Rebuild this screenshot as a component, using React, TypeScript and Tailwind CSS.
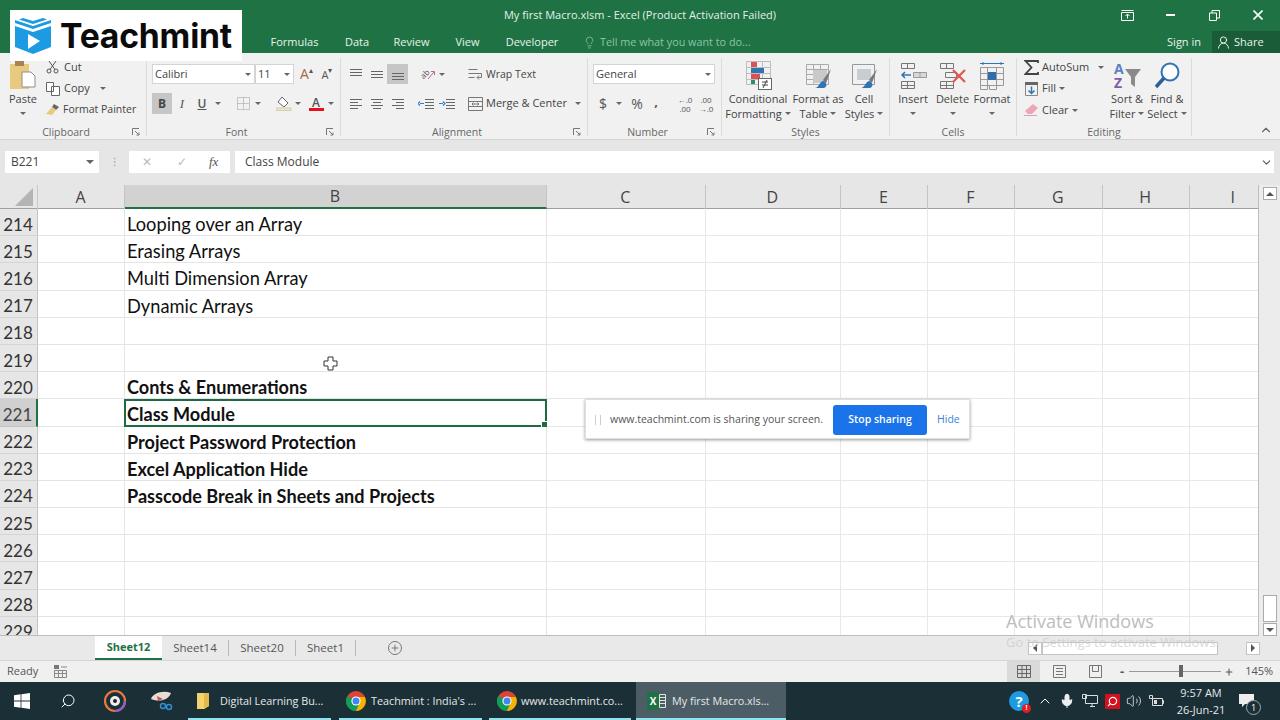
import { ReactNode } from "react";
import clsx from "clsx";
import { ChevronUp, ChevronDown, Search, Lightbulb, UserRound, Mic, Volume2, Plus } from "lucide-react";

const rows: { n: number; text?: string; bold?: boolean; selected?: boolean }[] = [
  { n: 214, text: "Looping over an Array" },
  { n: 215, text: "Erasing Arrays" },
  { n: 216, text: "Multi Dimension Array" },
  { n: 217, text: "Dynamic Arrays" },
  { n: 218 },
  { n: 219 },
  { n: 220, text: "Conts & Enumerations", bold: true },
  { n: 221, text: "Class Module", bold: true, selected: true },
  { n: 222, text: "Project Password Protection", bold: true },
  { n: 223, text: "Excel Application Hide", bold: true },
  { n: 224, text: "Passcode Break in Sheets and Projects", bold: true },
  { n: 225 },
  { n: 226 },
  { n: 227 },
  { n: 228 },
  { n: 229 },
];

const gridCols = "grid grid-cols-[38px_87px_422px_158.5px_135.5px_87px_87px_87.5px_87.5px_87.5px]";

function Caret({ className }: { className?: string }) {
  return <span className={clsx("inline-block w-0 h-0 border-x-[3px] border-x-transparent border-t-[3px] border-t-[#666]", className)} />;
}

function Slot({ w, children, active }: { w: string; children?: ReactNode; active?: boolean }) {
  return <div className={clsx("flex items-center justify-center h-full shrink-0", w, active && "bg-[#c6c6c6]")}>{children}</div>;
}

function Lines({ align }: { align: "l" | "c" | "r" }) {
  const x = align === "l" ? [1, 1, 1, 1] : align === "c" ? [1, 3, 1, 3] : [1, 5, 1, 5];
  const w = [12, 8, 12, 8];
  return (
    <svg width="14" height="12" viewBox="0 0 14 12">
      {[1, 4, 7, 10].map((y, i) => (
        <rect key={y} x={x[i]} y={y} width={w[i]} height="1" fill="#666" />
      ))}
    </svg>
  );
}

function VAlign({ top }: { top: number }) {
  return (
    <svg width="14" height="12" viewBox="0 0 14 12">
      {[0, 3, 6].map((d) => (
        <rect key={d} x="1" y={top + d} width="12" height="1" fill="#666" />
      ))}
    </svg>
  );
}

function Indent({ flip }: { flip?: boolean }) {
  return (
    <svg width="16" height="12" viewBox="0 0 16 12">
      {[1, 4, 7, 10].map((y) => (
        <rect key={y} x="7" y={y} width="9" height="1" fill="#666" />
      ))}
      <path d={flip ? "M0 5.5h4M4 3.5l2 2-2 2" : "M2 5.5h4M2 3.5l-2 2 2 2"} stroke="#2b7cd3" fill="none" strokeWidth="1.2" />
    </svg>
  );
}

function Big({ w, icon, lines, caretOnly }: { w: string; icon: ReactNode; lines: string[]; caretOnly?: boolean }) {
  return (
    <div className={clsx("flex flex-col items-center pt-[7px] shrink-0", w)}>
      <div className="h-[31px] flex items-center justify-center">{icon}</div>
      <div className="text-[11px] leading-[15px] text-[#444] whitespace-nowrap text-center">
        {lines.map((l, i) => (
          <div key={l} className="flex items-center justify-center gap-[3px]">
            {l}
            {i === lines.length - 1 && !caretOnly && <Caret />}
          </div>
        ))}
        {caretOnly && (
          <div className="h-[15px] flex items-center justify-center">
            <Caret />
          </div>
        )}
      </div>
    </div>
  );
}

function Group({ w, label, launcher, children }: { w: string; label: string; launcher?: boolean; children: ReactNode }) {
  return (
    <div className={clsx("flex flex-col shrink-0 h-full", w)}>
      <div className="flex-1 border-r border-[#dcdcdc] min-h-0 flex flex-col mt-[5px] mb-[3px]">
        <div className="flex-1 min-h-0 -mt-[5px]">{children}</div>
        <div className="h-[14px] flex items-center -mb-[3px]">
          <div className="flex-1 text-center text-[10.5px] text-[#666] leading-none">{label}</div>
          {launcher && (
            <div className="w-[14px] flex justify-start">
              <svg width="8" height="8" viewBox="0 0 8 8" fill="none" stroke="#777">
                <path d="M.5 7V.5H7M3 3l4 4M4.5 7H7V4.5" />
              </svg>
            </div>
          )}
        </div>
      </div>
    </div>
  );
}

function SmallRows({ children, pl }: { children: ReactNode; pl: string }) {
  return <div className={clsx("flex flex-col pt-[11px] gap-[9px]", pl)}>{children}</div>;
}

function Combo({ w, text }: { w: string; text: string }) {
  return (
    <div className={clsx("h-[20px] bg-white border border-[#d4d4d4] flex items-center justify-between px-[2px] text-[11px] text-[#444] shrink-0", w)}>
      <span>{text}</span>
      <Caret className="mr-[1px]" />
    </div>
  );
}

function MiniGrid({ children }: { children?: ReactNode }) {
  return (
    <svg width="30" height="30" viewBox="0 0 30 30" fill="none">
      {children}
    </svg>
  );
}

function TeachmintLogo() {
  return (
    <div className="absolute left-[10px] top-[10px] w-[232px] h-[51px] bg-white flex items-center pl-[5px]">
      <svg width="36" height="38" viewBox="0 0 36 38" className="shrink-0">
        <path d="M0 9 L18 15 L36 9 V30 L18 37 L0 30 Z" fill="#1c9be2" />
        <path d="M0 6 L18 12 L36 6 L36 3 L18 9 L0 3 Z" fill="#1c9be2" />
        <path d="M4 2.5 L18 7 L32 2.5 L28 1 L18 4 L8 1 Z" fill="#1c9be2" />
        <path d="M13 17 L25 24 L13 32 Z" fill="#fff" />
      </svg>
      <span className="font-['Inter',sans-serif] font-bold text-[33.7px] tracking-[-0.2px] text-[#0b0b0b] ml-[9px] leading-none">Teachmint</span>
    </div>
  );
}

function ChromeIcon() {
  return (
    <svg width="20" height="20" viewBox="0 0 20 20">
      <circle cx="10" cy="10" r="10" fill="#db4437" />
      <path d="M10 10 L1.3 5 A10 10 0 0 0 10 20 L15 11 Z" fill="#0f9d58" />
      <path d="M10 6 H18.9 A10 10 0 0 1 10 20 L14 11 Z" fill="#f4b400" />
      <circle cx="10" cy="10" r="4.6" fill="#fff" />
      <circle cx="10" cy="10" r="3.5" fill="#4285f4" />
    </svg>
  );
}

function TaskItem({ w, icon, text, active }: { w: string; icon: ReactNode; text: string; active?: boolean }) {
  return (
    <div className={clsx("relative flex items-center h-full shrink-0 text-[10.8px] text-[#e4e8ea]", w, active && "bg-[#4d5d65]")}>
      {icon}
      <span className="whitespace-nowrap">{text}</span>
      <div className="absolute left-0 right-0 bottom-0 h-[2px] bg-[#90e3f0]" />
    </div>
  );
}

export default function App() {
  return (
    <div className="relative w-[1280px] h-[720px] overflow-hidden flex flex-col font-['Open_Sans',sans-serif] bg-white">
      {/* title bar and tabs */}
      <div className="h-[53px] bg-[#1f7244] text-white shrink-0 flex flex-col">
        <div className="h-[30px] flex items-center relative">
          <div className="flex-1 text-center text-[11px] text-[#e4f0e8]">My first Macro.xlsm - Excel (Product Activation Failed)</div>
          <div className="absolute right-0 top-0 h-full flex items-center">
            <Slot w="w-[44px]">
              <svg width="13" height="11" viewBox="0 0 13 11" fill="none" stroke="#fff">
                <path d="M.5 2.5h12v8H.5zM.5.5h12M6.5 8.5V4.5M4.5 6l2-2 2 2" />
              </svg>
            </Slot>
            <Slot w="w-[43px]">
              <div className="w-[9px] h-[2px] bg-white" />
            </Slot>
            <Slot w="w-[44px]">
              <svg width="11" height="11" viewBox="0 0 11 11" fill="none" stroke="#fff">
                <path d="M.5 3h7v7.5h-7zM3 3V.5h7.5V8H8" />
              </svg>
            </Slot>
            <Slot w="w-[44px]">
              <svg width="10" height="10" viewBox="0 0 10 10" stroke="#fff" strokeWidth="1.6">
                <path d="M.5.5l9 9M9.5.5l-9 9" />
              </svg>
            </Slot>
          </div>
        </div>
        <div className="h-[23px] flex items-center text-[11px] text-[#e8f2ec] pt-[1px]">
          <div className="w-[163px] shrink-0" />
          <Slot w="w-[95px]">Page Layout</Slot>
          <Slot w="w-[73px]">Formulas</Slot>
          <Slot w="w-[52px]">Data</Slot>
          <Slot w="w-[57px]">Review</Slot>
          <Slot w="w-[55px]">View</Slot>
          <Slot w="w-[74px]">Developer</Slot>
          <div className="flex items-center ml-[14px] text-[#8ec4a4] text-[10.8px]">
            <Lightbulb size={13} strokeWidth={1.4} className="mr-[4px]" />
            Tell me what you want to do...
          </div>
          <div className="flex-1" />
          <span className="mr-[11px]">Sign in</span>
          <div className="w-[68px] h-full bg-[#1a5c37] flex items-center pl-[4px]">
            <UserRound size={15} strokeWidth={1.6} className="mr-[3px]" />
            Share
          </div>
        </div>
      </div>

      {/* ribbon */}
      <div className="h-[87px] bg-[#f1f1f1] shrink-0 flex relative border-b border-[#d2d2d2]">
        <Group w="w-[147px]" label="Clipboard" launcher>
          <div className="flex h-full">
            <div className="w-[46px] flex flex-col items-center pt-[8px]">
              <svg width="28" height="30" viewBox="0 0 28 30">
                <rect x="1" y="3" width="19" height="25" fill="#e9c87f" />
                <rect x="6" y="0" width="9" height="5" fill="#a9834f" />
                <path d="M13 11h9l4 4v11H13z" fill="#fff" stroke="#8d8d8d" />
              </svg>
              <span className="text-[11px] text-[#444] leading-[15px]">Paste</span>
              <Caret className="mt-[6px]" />
            </div>
            <div className="flex flex-col text-[11px] text-[#444] pt-[5px] gap-[3.5px]">
              <div className="flex items-center h-[18px] gap-[4px]">
                <svg width="14" height="14" viewBox="0 0 14 14" fill="none" stroke="#555">
                  <circle cx="3" cy="11" r="2" />
                  <circle cx="10" cy="11" r="2" />
                  <path d="M4 9.5L10 1M9 9.5L3 1" />
                </svg>
                Cut
              </div>
              <div className="flex items-center h-[18px] gap-[4px]">
                <svg width="14" height="14" viewBox="0 0 14 14" fill="#fff" stroke="#666">
                  <path d="M.5.5h7v9h-7zM5.5 4.5h8v9h-8z" />
                </svg>
                Copy
                <Caret className="ml-[6px]" />
              </div>
              <div className="flex items-center h-[18px] gap-[3px] -ml-[1px] text-[10.5px] whitespace-nowrap">
                <svg width="15" height="14" viewBox="0 0 15 14">
                  <path d="M9 1l5 3-3 3-4-3z" fill="#666" />
                  <path d="M7 4l4 3-4 5-6-1z" fill="#e9c87f" />
                </svg>
                Format Painter
              </div>
            </div>
          </div>
        </Group>

        <Group w="w-[194px]" label="Font" launcher>
          <SmallRows pl="pl-[5px]">
            <div className="flex h-[20px]">
              <Combo w="w-[103px]" text="Calibri" />
              <Combo w="w-[39px]" text="11" />
              <Slot w="w-[25px]">
                <span className="text-[14px] text-[#a8664a] leading-none">A</span>
                <span className="text-[8px] text-[#555] -mt-[8px]">▴</span>
              </Slot>
              <Slot w="w-[16px]">
                <span className="text-[11px] text-[#555] leading-none">A</span>
                <span className="text-[8px] text-[#555] -mt-[8px]">▾</span>
              </Slot>
            </div>
            <div className="flex h-[21px] text-[#555] text-[12px]">
              <Slot w="w-[20px]" active><span className="font-bold text-[#444]">B</span></Slot>
              <Slot w="w-[20px]"><span className="italic font-['Liberation_Serif',serif] text-[13px]">I</span></Slot>
              <Slot w="w-[20px]"><span className="underline font-semibold">U</span></Slot>
              <Slot w="w-[12px]"><Caret /></Slot>
              <div className="w-[9px]" />
              <Slot w="w-[20px]">
                <svg width="13" height="13" viewBox="0 0 13 13" fill="none" stroke="#999" strokeDasharray="1 1">
                  <path d="M.5.5h12v12H.5zM6.5.5v12M.5 6.5h12" />
                </svg>
              </Slot>
              <Slot w="w-[10px]"><Caret /></Slot>
              <div className="w-[11px]" />
              <Slot w="w-[20px]">
                <svg width="16" height="15" viewBox="0 0 16 15">
                  <path d="M6 1l6 6-4 4-6-5z" fill="#fff" stroke="#666" />
                  <rect x="0" y="12" width="15" height="2.5" fill="#f3e9b8" stroke="#aaa" strokeWidth=".5" />
                </svg>
              </Slot>
              <Slot w="w-[8px]"><Caret /></Slot>
              <div className="w-[4px]" />
              <Slot w="w-[20px]">
                <div className="flex flex-col items-center leading-none">
                  <span className="text-[12px] font-semibold text-[#555] leading-[11px]">A</span>
                  <div className="w-[15px] h-[3px] bg-[#e8101c]" />
                </div>
              </Slot>
              <Slot w="w-[10px]"><Caret /></Slot>
            </div>
          </SmallRows>
        </Group>

        <Group w="w-[247px]" label="Alignment" launcher>
          <SmallRows pl="pl-[4px]">
            <div className="flex h-[20px] text-[11px] text-[#444]">
              <Slot w="w-[21px]"><VAlign top={1} /></Slot>
              <Slot w="w-[21px]"><VAlign top={3} /></Slot>
              <Slot w="w-[21px]" active><VAlign top={5} /></Slot>
              <div className="w-[10px]" />
              <Slot w="w-[20px]">
                <span className="inline-block -rotate-45 text-[8px] leading-none text-[#555] -mr-[3px]">ab</span>
                <svg width="9" height="12" viewBox="0 0 9 12" fill="none">
                  <path d="M1 11l6-7M4 3.5h3.5V7" stroke="#c2698f" />
                </svg>
              </Slot>
              <Slot w="w-[8px]"><Caret /></Slot>
              <div className="w-[20px]" />
              <Slot w="w-[18px]">
                <svg width="15" height="14" viewBox="0 0 15 14" fill="none" stroke="#777">
                  <path d="M.5 2.5h9M.5 6.5h13M.5 10.5h6M13.5 6.5v4h-4M11 8.5l-2 2 2 2" />
                </svg>
              </Slot>
              <span className="ml-[2px] leading-[20px] text-[10.5px]">Wrap Text</span>
            </div>
            <div className="flex h-[21px] text-[11px] text-[#444]">
              <Slot w="w-[21px]"><Lines align="l" /></Slot>
              <Slot w="w-[21px]"><Lines align="c" /></Slot>
              <Slot w="w-[21px]"><Lines align="r" /></Slot>
              <div className="w-[8px]" />
              <Slot w="w-[20px]"><Indent /></Slot>
              <div className="w-[1px]" />
              <Slot w="w-[20px]"><Indent flip /></Slot>
              <div className="w-[9px]" />
              <Slot w="w-[18px]">
                <svg width="15" height="14" viewBox="0 0 15 14" fill="none" stroke="#777">
                  <path d="M.5.5h14v13H.5zM.5 4.5h14M.5 9.5h14M4 7h7M9.5 5.5L11 7 9.5 8.5M5.5 5.5L4 7l1.5 1.5" />
                </svg>
              </Slot>
              <span className="ml-[2px] leading-[20px] whitespace-nowrap">Merge &amp; Center</span>
              <Caret className="ml-[8px] mt-[9px]" />
            </div>
          </SmallRows>
        </Group>

        <Group w="w-[134px]" label="Number" launcher>
          <SmallRows pl="pl-[5px]">
            <Combo w="w-[122px]" text="General" />
            <div className="flex h-[21px] text-[#555] pl-[2px]">
              <Slot w="w-[16px]"><span className="text-[14px]">$</span></Slot>
              <Slot w="w-[16px]"><Caret /></Slot>
              <Slot w="w-[20px]"><span className="text-[14px]">%</span></Slot>
              <Slot w="w-[18px]"><span className="text-[13px] font-bold -mt-[4px]">,</span></Slot>
              <div className="w-[10px]" />
              <Slot w="w-[20px]">
                <div className="text-[8px] leading-[9px] text-center whitespace-nowrap">←.0<br />.00</div>
              </Slot>
              <div className="w-[1px]" />
              <Slot w="w-[20px]">
                <div className="text-[8px] leading-[9px] text-center whitespace-nowrap">.00<br />→.0</div>
              </Slot>
            </div>
          </SmallRows>
        </Group>

        <Group w="w-[168px]" label="Styles">
          <div className="flex">
            <Big
              w="w-[72px]"
              lines={["Conditional", "Formatting"]}
              icon={
                <MiniGrid>
                  <path d="M3.5.5h24v23h-24zM3.5 6.5h24M3.5 12.5h24M3.5 18.5h24M11.5.5v23M19.5.5v23" stroke="#bcbcbc" />
                  <rect x="8" y="1" width="6" height="5" fill="#d9534f" />
                  <rect x="8" y="7" width="13" height="5" fill="#2f75b5" />
                  <rect x="8" y="13" width="9" height="5" fill="#d9534f" />
                  <rect x="8" y="19" width="4" height="4" fill="#2e8b7a" />
                  <rect x="15.5" y="17.5" width="13" height="11" fill="#fff" stroke="#666" />
                  <path d="M19 21h6M19 24h6M24 19l-4 8" stroke="#444" />
                </MiniGrid>
              }
            />
            <Big
              w="w-[48px]"
              lines={["Format as", "Table"]}
              icon={
                <MiniGrid>
                  <path d="M3.5 3.5h22v20h-22zM3.5 8.5h22M3.5 13.5h22M3.5 18.5h22M10.5 3.5v20M17.5 3.5v20" stroke="#aaa" />
                  <rect x="10" y="9" width="14" height="13" fill="#c9c9c9" />
                  <path d="M28 8l-8 11 3 3z" fill="#777" />
                  <path d="M21 20c-5 0-4 6-9 7h9c3-1 3-4 1-6z" fill="#2f75b5" />
                </MiniGrid>
              }
            />
            <Big
              w="w-[44px]"
              lines={["Cell", "Styles"]}
              icon={
                <MiniGrid>
                  <path d="M3.5 3.5h22v20h-22z" stroke="#999" />
                  <rect x="8" y="8" width="14" height="11" fill="#c9ccd1" />
                  <path d="M28 8l-8 11 3 3z" fill="#777" />
                  <path d="M21 20c-5 0-4 6-9 7h9c3-1 3-4 1-6z" fill="#2f75b5" />
                </MiniGrid>
              }
            />
          </div>
        </Group>

        <Group w="w-[127px]" label="Cells">
          <div className="flex">
            <Big
              w="w-[46px]"
              caretOnly
              lines={["Insert"]}
              icon={
                <MiniGrid>
                  <path d="M3.5 2.5h13v5h-13zM9.5 2.5v5M3.5 20.5h13v7h-13zM3.5 24.5h13M9.5 20.5v7" stroke="#777" />
                  <path d="M15.5 11.5h13v5h-13zM22 11.5v5" stroke="#999" fill="#d8d8d8" />
                  <path d="M4 14h9M7 11l-3 3 3 3" stroke="#2f75b5" strokeWidth="1.5" />
                </MiniGrid>
              }
            />
            <Big
              w="w-[33px]"
              caretOnly
              lines={["Delete"]}
              icon={
                <MiniGrid>
                  <path d="M2.5 2.5h13v5h-13zM8.5 2.5v5M2.5 20.5h13v7h-13zM2.5 24.5h13M8.5 20.5v7M7.5 11.5h11v5h-11z" stroke="#777" />
                  <path d="M15 9l12 12M27 9L15 21" stroke="#e2574c" strokeWidth="2.2" />
                </MiniGrid>
              }
            />
            <Big
              w="w-[46px]"
              caretOnly
              lines={["Format"]}
              icon={
                <MiniGrid>
                  <path d="M3 2.5h24M6 1v3M24 1v3M9 2.5h12" stroke="#2f75b5" />
                  <path d="M3.5 6.5h23v18h-23zM3.5 12.5h23M3.5 18.5h23M10.5 6.5v18M19.5 6.5v18M3.5 24.5v4h7v-4M12.5 24.5v4h7v-4" stroke="#999" />
                  <rect x="11" y="11" width="8" height="8" fill="#2f6ea8" />
                </MiniGrid>
              }
            />
          </div>
        </Group>

        <Group w="w-[175px]" label="Editing">
          <div className="flex">
            <div className="w-[88px] flex flex-col text-[11px] text-[#444] pl-[7px] pt-[5px] gap-[3.5px] shrink-0">
              <div className="flex items-center h-[18px] gap-[3px] whitespace-nowrap">
                <svg width="15" height="15" viewBox="0 0 15 15" fill="none" stroke="#444" strokeWidth="1.8" className="shrink-0">
                  <path d="M14 3V1H1.5L7.5 7.5 1.5 14H14v-2" />
                </svg>
                AutoSum
                <Caret className="ml-[6px] shrink-0" />
              </div>
              <div className="flex items-center h-[18px] gap-[3px]">
                <svg width="15" height="15" viewBox="0 0 15 15" fill="none" className="shrink-0">
                  <path d="M1.5 2.5h12v12h-12z" stroke="#888" />
                  <rect x="1" y="1" width="13" height="3" fill="#666" />
                  <path d="M7.5 5.5v7M4.5 9.5l3 3 3-3" stroke="#2f75b5" strokeWidth="1.5" />
                </svg>
                Fill
                <Caret />
              </div>
              <div className="flex items-center h-[18px] gap-[3px]">
                <svg width="15" height="14" viewBox="0 0 15 14" className="shrink-0">
                  <path d="M9 1l5 4-6 6H4L1 8z" fill="#eda6b8" />
                  <rect x="0" y="12" width="13" height="1" fill="#d9a2b0" />
                </svg>
                Clear
                <Caret />
              </div>
            </div>
            <Big
              w="w-[44px]"
              lines={["Sort &", "Filter"]}
              icon={
                <svg width="30" height="30" viewBox="0 0 30 30">
                  <text x="2" y="13" fontSize="14" fontWeight="700" fill="#5b7fc7" fontFamily="Open Sans, sans-serif">A</text>
                  <text x="2" y="27" fontSize="14" fontWeight="700" fill="#7a5fa8" fontFamily="Open Sans, sans-serif">Z</text>
                  <path d="M13 8h16l-6 8v10l-4-3v-7z" fill="#8a8a8a" />
                </svg>
              }
            />
            <Big
              w="w-[36px]"
              lines={["Find &", "Select"]}
              icon={
                <svg width="30" height="30" viewBox="0 0 30 30" fill="none">
                  <circle cx="18" cy="11" r="8.5" stroke="#2f75b5" strokeWidth="2" fill="#fff" />
                  <path d="M12 17L4 26" stroke="#2f5f96" strokeWidth="3.5" />
                </svg>
              }
            />
          </div>
        </Group>
        <div className="flex-1 flex items-end justify-end pr-[7px] pb-[2px]">
          <ChevronUp size={14} strokeWidth={2} className="text-[#666]" />
        </div>
      </div>

      {/* name box + formula bar */}
      <div className="h-[45px] bg-[#e6e6e6] shrink-0 flex items-start pt-[11px] text-[12px] text-[#444]">
        <div className="ml-[5px] w-[94px] h-[22px] bg-white flex items-center justify-between pl-[6px] pr-[5px]">
          B221
          <Caret className="border-x-[4px] border-t-[4px]" />
        </div>
        <div className="w-[30px] h-[22px] flex items-center justify-center text-[#aaa]">⁝</div>
        <div className="w-[101px] h-[22px] bg-white flex items-center pl-[12px] text-[#bbb]">
          <span className="w-[12px] text-center">✕</span>
          <span className="w-[12px] ml-[23px] text-center">✓</span>
          <span className="ml-[21px] italic text-[#555] font-['Liberation_Serif',serif] text-[13px]">fx</span>
        </div>
        <div className="w-[5px]" />
        <div className="w-[1039px] h-[22px] bg-white flex items-center justify-between pl-[10px] pr-[1px]">
          Class Module
          <ChevronDown size={13} className="text-[#555]" />
        </div>
      </div>

      {/* sheet */}
      <div className="h-[451px] shrink-0 flex relative">
        <div className="w-[1259px] flex flex-col overflow-hidden border-r border-b border-[#bdbdbd]">
          <div className={clsx(gridCols, "h-[24px] shrink-0 bg-[#e6e6e6] border-b border-[#a0a0a0] text-[16px] text-[#444]")}>
            <div className="flex items-end justify-end pr-[4px] pb-[3px] border-r border-[#c8c8c8]">
              <div className="w-0 h-0 border-l-[18px] border-l-transparent border-b-[18px] border-b-[#b4b4b4]" />
            </div>
            {["A", "B", "C", "D", "E", "F", "G", "H", "I"].map((c) => (
              <div
                key={c}
                className={clsx(
                  "flex items-center justify-center pr-[1px] border-r border-[#c4c4c4]",
                  c === "B" && "bg-[#d2d2d2] border-b-2 border-b-[#1f7244] h-[24px]"
                )}
              >
                {c}
              </div>
            ))}
          </div>
          {rows.map((r) => (
            <div key={r.n} className={clsx(gridCols, "grid-rows-[27.2px] h-[27.2px] shrink-0 font-['Lato',sans-serif] leading-none")}>
              <div
                className={clsx(
                  "flex items-center justify-center pr-[1px] pt-[4px] text-[17px] border-r border-b text-[#333]",
                  r.selected ? "bg-[#d0d0d0] border-r-2 border-r-[#1f7244] border-b-[#c4c4c4] text-[#444]" : "bg-[#e6e6e6] border-r-[#c4c4c4] border-b-[#d4d4d4]"
                )}
              >
                {r.n}
              </div>
              <div className="border-r border-b border-[#e4e4e4]" />
              <div
                className={clsx(
                  "relative flex items-center pl-[2px] pt-[4px] text-[#111] border-r border-b border-[#e4e4e4] whitespace-nowrap",
                  r.bold ? "font-bold text-[18.1px]" : "text-[18.25px]"
                )}
              >
                {r.text}
                {r.selected && (
                  <div className="absolute -left-[1px] top-0 -right-[1px] -bottom-[1px] border-2 border-[#1f6b41]">
                    <div className="absolute -right-[3px] -bottom-[3px] w-[5px] h-[5px] bg-[#1f6b41] border border-white box-content" />
                  </div>
                )}
              </div>
              {[0, 1, 2, 3, 4, 5, 6].map((i) => (
                <div key={i} className="border-r border-b border-[#e8e8e8]" />
              ))}
            </div>
          ))}
        </div>
        <div className="w-[21px] bg-[#ececec] flex flex-col items-center pt-[2px]">
          <div className="w-[14px] h-[13px] bg-white border border-[#ababab] flex items-center justify-center">
            <div className="w-0 h-0 border-x-[4px] border-x-transparent border-b-[4px] border-b-[#555]" />
          </div>
          <div className="flex-1" />
          <div className="w-[14px] h-[27px] bg-white border border-[#ababab]" />
          <div className="w-[14px] h-[13px] bg-white border border-[#ababab] flex items-center justify-center mt-[1px]">
            <div className="w-0 h-0 border-x-[4px] border-x-transparent border-t-[4px] border-t-[#555]" />
          </div>
        </div>
      </div>

      {/* sheet tabs */}
      <div className="h-[24px] bg-[#e9e9e9] shrink-0 flex items-stretch text-[11.5px] text-[#555]">
        <div className="w-[95px] shrink-0" />
        <div className="w-[67px] shrink-0 bg-white border-b-2 border-[#1f7244] flex items-center justify-center font-bold text-[11px] text-[#1f7244]">Sheet12</div>
        <div className="w-[67px] shrink-0 border-r border-[#b8b8b8] my-[4px] flex items-center justify-center">Sheet14</div>
        <div className="w-[67px] shrink-0 border-r border-[#b8b8b8] my-[4px] flex items-center justify-center">Sheet20</div>
        <div className="w-[60px] shrink-0 border-r border-[#b8b8b8] my-[4px] flex items-center justify-center">Sheet1</div>
        <div className="w-[78px] shrink-0 flex items-center justify-center">
          <div className="w-[14px] h-[14px] rounded-full border border-[#777] flex items-center justify-center">
            <Plus size={10} strokeWidth={2} className="text-[#666]" />
          </div>
        </div>
        <div className="w-[594px] shrink-0" />
        <div className="w-[14px] h-[13px] shrink-0 bg-white border border-[#c4c4c4] self-center flex items-center justify-center">
          <div className="w-0 h-0 border-y-[4px] border-y-transparent border-r-[4px] border-r-[#555]" />
        </div>
        <div className="w-[176px] h-[13px] shrink-0 bg-white border border-[#c4c4c4] self-center" />
        <div className="w-[28px] shrink-0" />
        <div className="w-[14px] h-[13px] shrink-0 bg-white border border-[#c4c4c4] self-center flex items-center justify-center">
          <div className="w-0 h-0 border-y-[4px] border-y-transparent border-l-[4px] border-l-[#555]" />
        </div>
      </div>

      {/* status bar */}
      <div className="h-[22px] bg-[#f0f0f0] shrink-0 flex items-center text-[11px] text-[#555] border-t border-[#d6d6d6]">
        <span className="ml-[7px] w-[31px] shrink-0">Ready</span>
        <svg width="13" height="13" viewBox="0 0 13 13" className="ml-[16px] shrink-0">
          <rect x="0" y="0" width="5" height="4" fill="#777" />
          <path d="M.5 5.5h12v7H.5zM.5 8.5h12M4.5 5.5v7M8.5 5.5v7M7 2h6" stroke="#888" fill="none" />
        </svg>
        <div className="w-[940px] shrink-0" />
        <div className="w-[33px] h-full bg-[#dadada] flex items-center justify-center shrink-0">
          <svg width="14" height="13" viewBox="0 0 14 13" fill="none" stroke="#666">
            <path d="M.5.5h13v12H.5zM.5 4.5h13M.5 8.5h13M5 .5v12M9.5.5v12" />
          </svg>
        </div>
        <Slot w="w-[38px]">
          <svg width="13" height="13" viewBox="0 0 13 13" fill="none" stroke="#777">
            <path d="M.5.5h12v12H.5zM3 3.5h7M3 6.5h7M3 9.5h7" />
          </svg>
        </Slot>
        <Slot w="w-[34px]">
          <svg width="13" height="13" viewBox="0 0 13 13" fill="none" stroke="#777">
            <path d="M.5.5h12v12H.5zM3.5.5v6h6v-6" />
          </svg>
        </Slot>
        <span className="ml-[8px] text-[13px] font-bold leading-none">-</span>
        <div className="relative w-[92px] h-[1px] bg-[#999] ml-[5px]">
          <div className="absolute left-[50px] -top-[6px] w-[4px] h-[12px] bg-[#666]" />
        </div>
        <Plus size={10} strokeWidth={2.5} className="ml-[3px]" />
        <span className="ml-[11px]">145%</span>
      </div>

      {/* taskbar */}
      <div className="h-[38px] bg-[#1b2f36] shrink-0 flex items-center relative">
        <Slot w="w-[44px]">
          <svg width="16" height="16" viewBox="0 0 16 16" fill="#fff">
            <path d="M0 2.2L6.6 1.3v6.3H0zM7.4 1.2L16 0v7.6H7.4zM0 8.4h6.6v6.3L0 13.8zM7.4 8.4H16V16l-8.6-1.2z" />
          </svg>
        </Slot>
        <Slot w="w-[48px]">
          <Search size={16} strokeWidth={1.5} className="text-white -scale-x-100" />
        </Slot>
        <Slot w="w-[46px]">
          <svg width="24" height="24" viewBox="0 0 24 24" fill="none">
            <circle cx="12" cy="12" r="10" stroke="#e87a3c" strokeWidth="2.2" />
            <path d="M12 22a10 10 0 0 0 10-10" stroke="#8a5fd0" strokeWidth="2.2" />
            <circle cx="12" cy="12" r="5" fill="#eee" />
            <circle cx="12" cy="12" r="2" fill="#222" />
          </svg>
        </Slot>
        <Slot w="w-[46px]">
          <svg width="24" height="22" viewBox="0 0 24 22">
            <path d="M2 9C4 3 14 0 22 3c-2 6-10 10-20 6z" fill="#e8dcd4" />
            <path d="M8 6l6 3-5 2z" fill="#c05a5a" />
            <circle cx="14" cy="16" r="2.5" fill="none" stroke="#2f8fd0" strokeWidth="1.5" />
            <circle cx="20" cy="17" r="2.5" fill="none" stroke="#2f8fd0" strokeWidth="1.5" />
          </svg>
        </Slot>
        <div className="w-[4px]" />
        <TaskItem
          w="w-[143px]"
          text="Digital Learning Bu..."
          icon={
            <div className="pl-[8px] pr-[10px] flex">
              <svg width="14" height="18" viewBox="0 0 14 18">
                <path d="M1 1h11l1 13-5 3H1z" fill="#f4d36f" />
                <path d="M8 1h5v13l-5 3z" fill="#e3b94f" />
              </svg>
            </div>
          }
        />
        <div className="w-[8px]" />
        <TaskItem w="w-[143px]" text="Teachmint : India's ..." icon={<div className="pl-[7px] pr-[5px]"><ChromeIcon /></div>} />
        <div className="w-[7px]" />
        <TaskItem w="w-[142px]" text="www.teachmint.co..." icon={<div className="pl-[8px] pr-[4px]"><ChromeIcon /></div>} />
        <div className="w-[5px]" />
        <TaskItem
          w="w-[150px]"
          active
          text="My first Macro.xls..."
          icon={
            <div className="pl-[11px] pr-[5px] flex">
              <div className="w-[20px] h-[18px] flex items-center">
                <div className="w-[12px] h-[18px] bg-[#1f7244] text-white text-[10px] font-bold flex items-center justify-center">X</div>
                <svg width="7" height="14" viewBox="0 0 7 14" fill="none" stroke="#dfe6e2">
                  <path d="M.5.5h6v13h-6zM.5 3.5h6M.5 6.5h6M.5 9.5h6" />
                </svg>
              </div>
            </div>
          }
        />
        <div className="w-[223px]" />
        <div className="relative w-[20px] h-[20px] rounded-full bg-[#1c9be2] text-white text-[15px] font-bold flex items-center justify-center">
          ?
          <div className="absolute -right-[2px] -bottom-[2px] w-[9px] h-[9px] rounded-full bg-[#e01b24] text-[7px] flex items-center justify-center">!</div>
        </div>
        <ChevronUp size={16} strokeWidth={1.5} className="text-white ml-[8px]" />
        <Mic size={16} strokeWidth={1.5} className="text-[#eee] ml-[6px]" fill="#eee" />
        <svg width="16" height="14" viewBox="0 0 16 14" fill="none" stroke="#ddd" className="ml-[7px]">
          <path d="M3.5 1.5h12v8h-12zM8 12.5h5M10 9.5v3M.5.5h4v4h-4z" />
        </svg>
        <div className="ml-[7px] w-[15px] h-[15px] bg-[#d3101c] flex items-center justify-center">
          <Search size={11} strokeWidth={2.6} className="text-white -scale-x-100" />
        </div>
        <Volume2 size={16} strokeWidth={1.3} className="text-[#ddd] ml-[6px]" />
        <svg width="15" height="12" viewBox="0 0 15 12" fill="none" stroke="#ddd" className="ml-[7px]">
          <path d="M3.5 3.5h10v7h-10zM13.5 5.5h1v3h-1z" />
          <rect x="5" y="5" width="3" height="4" fill="#ddd" stroke="none" />
          <path d="M.5.5h3v3h-3z" />
        </svg>
        <div className="ml-[9px] w-[56px] text-[11px] leading-[17px] text-[#e4e8ea] text-center shrink-0">
          <div>9:57 AM</div>
          <div>26-Jun-21</div>
        </div>
        <div className="relative ml-[10px]">
          <svg width="15" height="14" viewBox="0 0 15 14" fill="#eee">
            <path d="M0 0h15v10H6l-3 3v-3H0z" />
          </svg>
          <div className="absolute left-[7px] top-[6px] w-[15px] h-[15px] rounded-full bg-[#1b2f36] border border-[#9aa] text-[9px] text-white flex items-center justify-center">1</div>
        </div>
      </div>

      {/* overlays */}
      <TeachmintLogo />

      <svg width="15" height="15" viewBox="0 0 15 15" className="absolute left-[323px] top-[356px]">
        <path d="M5 1h5v4h4v5h-4v4H5v-4H1V5h4z" fill="#fff" stroke="#333" />
      </svg>

      <div className="absolute left-[585px] top-[399px] w-[385px] h-[40px] bg-white border border-[#e0e0e0] shadow-[0_1px_3px_rgba(0,0,0,0.4)] flex items-center text-[10.5px] text-[#555] pt-[1px]">
        <div className="ml-[9px] w-[6px] h-[10px] border-x border-[#ccc] shrink-0" />
        <span className="ml-[9px] whitespace-nowrap">www.teachmint.com is sharing your screen.</span>
        <div className="ml-[10px] w-[94px] h-[30px] bg-[#1a73e8] rounded-[3px] text-white font-semibold flex items-center justify-center shrink-0">Stop sharing</div>
        <span className="ml-[10px] text-[#3d7fd9]">Hide</span>
      </div>

      <div className="absolute left-[1006px] top-[609px] text-[18px] text-[#bdbdbd] leading-[24px] whitespace-nowrap">Activate Windows</div>
      <div className="absolute left-[1006px] top-[634px] text-[13px] text-[#c8c8c8]/70 leading-[16px] whitespace-nowrap">Go to Settings to activate Windows.</div>
    </div>
  );
}
